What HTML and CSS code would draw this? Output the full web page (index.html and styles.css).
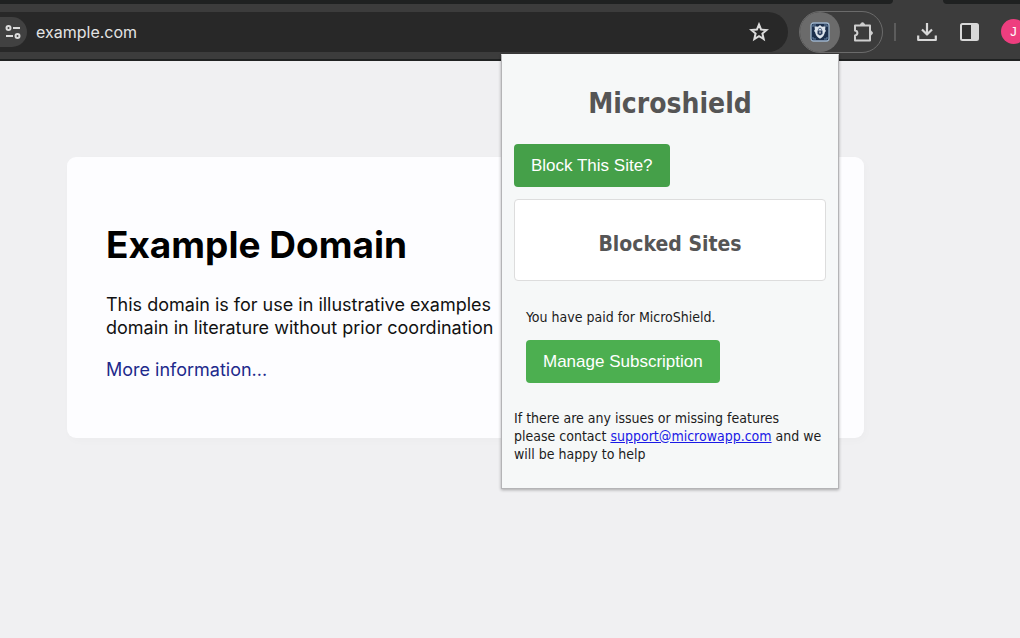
FILE: index.html
```html
<!DOCTYPE html>
<html lang="en">
<head>
<meta charset="utf-8">
<meta name="viewport" content="width=device-width, initial-scale=1">
<title>Example Domain</title>
<link rel="stylesheet" href="styles.css">
</head>
<body>
<header class="browser">
  <div class="tabstrip">
    <div class="tabs-left"></div>
    <div class="tab-active"></div>
    <div class="tabs-right"></div>
  </div>
  <div class="toolbar">
    <div class="omnibox">
      <button class="site-info" aria-label="Site information">
        <svg width="18" height="18" viewBox="0 0 18 18" fill="none" stroke="#dcdcdc" stroke-width="2">
          <circle cx="4.500" cy="5" r="2"/><path d="M9 5H16M2 13h7"/><circle cx="13.500" cy="13" r="2"/>
        </svg>
      </button>
      <input class="address" type="text" value="example.com" aria-label="Address">
      <button class="icon-button" aria-label="Bookmark">
        <svg width="20" height="20" viewBox="0 0 20 20" fill="none" stroke="#dcdcdc" stroke-width="2" stroke-linejoin="miter">
          <path d="M10 2.500l2.100 5.100 5.500.4-4.200 3.600 1.300 5.400-4.700-2.900-4.700 2.900 1.300-5.400L2.400 8l5.500-.4z"/>
        </svg>
      </button>
    </div>
    <div class="extensions">
      <button class="extension-active" aria-label="Microshield">
        <svg width="20" height="20" viewBox="0 0 20 20">
          <rect x="1" y="1" width="18" height="18" rx="2.500" fill="#1c2f4c" stroke="#9db4cb" stroke-width="1.300"/>
          <path d="M3 5V3h3M14 3h3v2M3 15v2h3M14 17h3v-2" fill="none" stroke="#6b88a6"/>
          <path d="M10 3l2 1.800 3.500-.6-.4 3.300.9 1.500-1 1c-.5 3-2.200 5.200-5 6.700-2.800-1.500-4.500-3.700-5-6.700l-1-1 .9-1.500-.4-3.300 3.500.6z" fill="#dce4ec"/>
          <path d="M7.500 8.500h5v3.500L10 13.500 7.500 12z" fill="#26395a"/>
          <path d="M8.500 8.500V7.500c0-1.800 3-1.800 3 0v1" fill="none" stroke="#4b5f7e"/>
          <path d="M10 9.500v2" stroke="#fff"/>
        </svg>
      </button>
      <button class="icon-button" aria-label="Extensions">
        <svg width="22" height="22" viewBox="0 0 22 22" fill="none" stroke="#cfcfcf" stroke-width="2" stroke-linejoin="round">
          <path d="M3 4.500h15v15H3v-5c3.200-.5 3.200-4.500 0-5z"/>
          <path d="M8.500 4c0-3 4-3 4 0zM18.500 10c2.500 0 2.500 4 0 4z" fill="#cfcfcf" stroke-width="1"/>
        </svg>
      </button>
    </div>
    <div class="divider"></div>
    <div class="actions">
      <button class="icon-button" aria-label="Downloads">
        <svg width="20" height="20" viewBox="0 0 20 20" fill="none" stroke="#d8d8d8" stroke-width="2.200">
          <path d="M10 1v11M5 7.500l5 5 5-5M1.200 13.500v4.500h17.600v-4.500" stroke-linejoin="round"/>
        </svg>
      </button>
      <button class="icon-button" aria-label="Side panel">
        <svg width="20" height="18" viewBox="0 0 20 18">
          <rect x="2" y="1" width="17" height="16" rx="1.500" fill="#303030" stroke="#d8d8d8" stroke-width="2"/>
          <path d="M12 1h7v16h-7z" fill="#d8d8d8"/>
        </svg>
      </button>
      <button class="avatar" aria-label="Profile">J</button>
    </div>
  </div>
  <section class="popup">
    <h2 class="popup-title">Microshield</h2>
    <button class="action block">Block This Site?</button>
    <div class="blocked">
      <h3 class="blocked-title">Blocked Sites</h3>
    </div>
    <div class="plan">
      <p class="popup-text">You have paid for MicroShield.</p>
      <button class="action">Manage Subscription</button>
    </div>
    <p class="popup-text">If there are any issues or missing features<br>please contact <a class="mail" href="mailto:support@microwapp.com">support@microwapp.com</a> and we<br>will be happy to help</p>
  </section>
</header>
<main class="page">
  <article class="card">
    <h1 class="card-title">Example Domain</h1>
    <p class="card-text">This domain is for use in illustrative examples<br>domain in literature without prior coordination</p>
    <a class="more" href="#">More information...</a>
  </article>
</main>
</body>
</html>
```
FILE: styles.css
```css
* {
  box-sizing: border-box;
}

body {
  margin: 0;
  min-height: 100vh;
  display: flex;
  flex-direction: column;
  background: #f0f0f2;
  font-family: Inter, "Liberation Sans", sans-serif;
  overflow: hidden;
}

h1, h2, h3, p {
  margin: 0;
}

button {
  border: 0;
  padding: 0;
  background: none;
  font-family: "Liberation Sans", Arial, sans-serif;
  cursor: pointer;
}

svg {
  display: block;
}

.browser {
  position: relative;
  background: #3c3c3c;
  border-bottom: 2px solid #202222;
}

.tabstrip {
  display: flex;
  height: 4px;
  background: #3c3c3c;
}

.tabs-left {
  flex: 1;
  background: #1f2121;
  border-bottom-right-radius: 4px;
}

.tab-active {
  width: 50px;
}

.tabs-right {
  width: 77px;
  background: #1f2121;
  border-bottom-left-radius: 4px;
}

.toolbar {
  display: flex;
  align-items: center;
  height: 55px;
}

.omnibox {
  flex: 1;
  display: flex;
  align-items: center;
  height: 40px;
  padding-right: 19px;
  background: #282828;
  border-radius: 0 20px 20px 0;
}

.site-info {
  display: flex;
  align-items: center;
  justify-content: flex-end;
  width: 27px;
  height: 30px;
  padding-right: 5px;
  background: #414141;
  border-radius: 0 15px 15px 0;
}

.address {
  flex: 1;
  min-width: 0;
  margin-left: 9px;
  padding: 0;
  border: 0;
  outline: 0;
  background: transparent;
  color: #e3e3e3;
  font-family: Inter, "Liberation Sans", sans-serif;
  font-size: 16px;
  line-height: 24px;
}

.extensions {
  display: flex;
  align-items: center;
  gap: 12px;
  height: 42px;
  margin-left: 11px;
  padding-right: 8px;
  border: 1px solid #6b6b6b;
  border-radius: 21px;
}

.extension-active {
  display: flex;
  align-items: center;
  justify-content: center;
  width: 40px;
  height: 40px;
  background: #6b6b6b;
  border-radius: 50%;
}

.divider {
  width: 2px;
  height: 18px;
  margin: 0 21px 0 11px;
  background: #5c5c5c;
}

.actions {
  display: flex;
  align-items: center;
  gap: 22px;
  width: 103px;
  overflow: hidden;
}

.avatar {
  flex: none;
  width: 25px;
  height: 25px;
  border-radius: 50%;
  background: #ee3e7f;
  color: #ffffff;
  font-size: 13px;
}

.popup {
  position: absolute;
  top: 54px;
  right: 181px;
  z-index: 1;
  width: 338px;
  padding: 32px 12px 25px;
  background: #f6f8f8;
  border: 1px solid #b4b4b6;
  border-top-color: #f6f8f8;
  box-shadow: 0 1px 3px #00000050;
  color: #1c1c1c;
  font-family: "DejaVu Sans Condensed", "DejaVu Sans", sans-serif;
  font-stretch: condensed;
}

.popup-title {
  margin-bottom: 23px;
  color: #555555;
  font-size: 28px;
  line-height: 34px;
  text-align: center;
}

.action {
  display: block;
  height: 43px;
  padding: 0 17px;
  border-radius: 4px;
  background: #4caf50;
  color: #ffffff;
  font-size: 17px;
}

.block {
  background: #45a049;
}

.blocked {
  margin: 12px 0 27px;
  padding: 30px 12px 22px;
  background: #ffffff;
  border: 1px solid #dddddd;
  border-radius: 4px;
}

.blocked-title {
  color: #555555;
  font-size: 21px;
  line-height: 28px;
  text-align: center;
}

.plan {
  display: grid;
  gap: 14px;
  justify-items: start;
  margin-bottom: 26px;
  padding: 0 12px;
}

.popup-text {
  font-size: 14px;
  line-height: 18px;
}

.mail {
  color: #1a1ae6;
}

.page {
  padding: 96px 156px 0 67px;
}

.card {
  padding: 66px 39px 56px;
  background: #fdfdff;
  border-radius: 9px;
  box-shadow: 2px 3px 8px #00000005;
}

.card-title {
  margin-bottom: 26px;
  color: #000000;
  font-size: 37px;
  line-height: 44px;
}

.card-text {
  margin-bottom: 19px;
  color: #111111;
  font-size: 18px;
  line-height: 23px;
}

.more {
  color: #1e2a8c;
  font-size: 18px;
  line-height: 24px;
  text-decoration: none;
}
```
